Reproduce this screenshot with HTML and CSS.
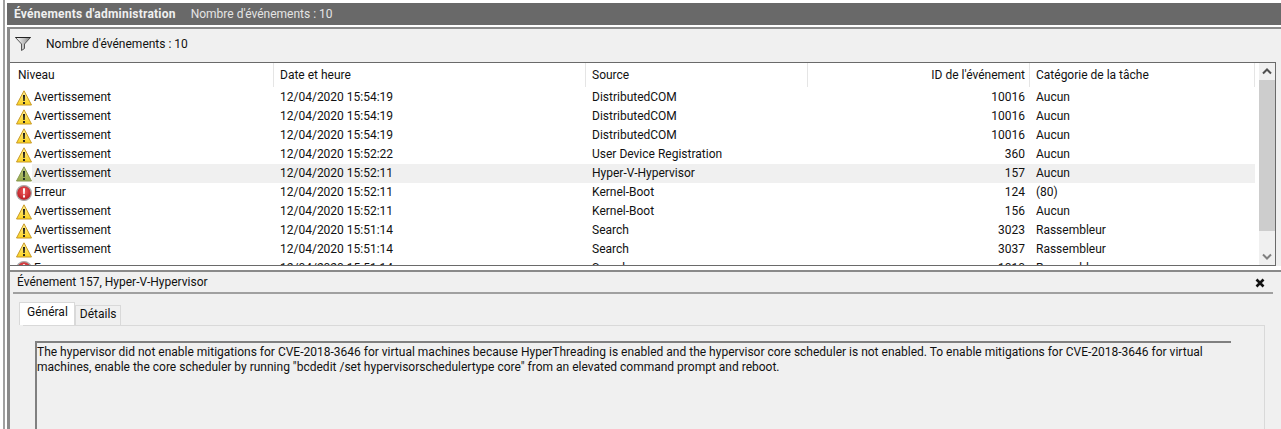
FILE: index.html
```html
<!DOCTYPE html>
<html lang="fr">
<head>
<meta charset="utf-8">
<title>Événements d'administration</title>
<link rel="stylesheet" href="styles.css">
</head>
<body>
<div class="outer">
  <div class="title-bar"><strong>Événements d'administration</strong><span>Nombre d'événements : 10</span></div>
  <div class="panel">
    <div class="list-pane">
      <div class="toolbar">
        <svg class="funnel" width="16" height="14" viewBox="0 0 16 14"><defs><linearGradient id="fg" x1="0" x2="1" y1="0" y2="0"><stop offset="0" stop-color="#fff"/><stop offset=".6" stop-color="#bbb"/><stop offset="1" stop-color="#777"/></linearGradient></defs><path d="M.5.5h15L9.5 7v4.5l-3 2V7z" fill="url(#fg)" stroke="#555" stroke-width="1"/><path d="M.5.5h15" stroke="#222" stroke-width="1"/></svg>
        <span>Nombre d'événements : 10</span>
      </div>
      <div class="list-frame">
        <div class="list">
          <div class="row head"><div>Niveau</div><div>Date et heure</div><div>Source</div><div class="num">ID de l'événement</div><div>Catégorie de la tâche</div></div>
          <div class="row"><div class="lvl"><svg class="ico" viewBox="0 0 16 16"><defs><linearGradient id="wy" x1="0" x2="0" y1="0" y2="1"><stop offset="0" stop-color="#fff09a"/><stop offset="1" stop-color="#fbd21e"/></linearGradient><linearGradient id="wg" x1="0" x2="0" y1="0" y2="1"><stop offset="0" stop-color="#c6cf84"/><stop offset="1" stop-color="#94a84a"/></linearGradient><radialGradient id="er" cx=".5" cy=".4" r=".6"><stop offset="0" stop-color="#ee5a5a"/><stop offset="1" stop-color="#b81820"/></radialGradient></defs><path d="M8 .8 15.5 15H.5z" fill="url(#wy)" stroke="#c89a28" stroke-linejoin="round"/><path d="M7 5h2l-.3 6H7.3zM7.1 12h1.8v2H7.1z" fill="#1a1a1a"/></svg>Avertissement</div><div>12/04/2020 15:54:19</div><div>DistributedCOM</div><div class="num">10016</div><div>Aucun</div></div>
          <div class="row"><div class="lvl"><svg class="ico" viewBox="0 0 16 16"><path d="M8 .8 15.5 15H.5z" fill="url(#wy)" stroke="#c89a28" stroke-linejoin="round"/><path d="M7 5h2l-.3 6H7.3zM7.1 12h1.8v2H7.1z" fill="#1a1a1a"/></svg>Avertissement</div><div>12/04/2020 15:54:19</div><div>DistributedCOM</div><div class="num">10016</div><div>Aucun</div></div>
          <div class="row"><div class="lvl"><svg class="ico" viewBox="0 0 16 16"><path d="M8 .8 15.5 15H.5z" fill="url(#wy)" stroke="#c89a28" stroke-linejoin="round"/><path d="M7 5h2l-.3 6H7.3zM7.1 12h1.8v2H7.1z" fill="#1a1a1a"/></svg>Avertissement</div><div>12/04/2020 15:54:19</div><div>DistributedCOM</div><div class="num">10016</div><div>Aucun</div></div>
          <div class="row"><div class="lvl"><svg class="ico" viewBox="0 0 16 16"><path d="M8 .8 15.5 15H.5z" fill="url(#wy)" stroke="#c89a28" stroke-linejoin="round"/><path d="M7 5h2l-.3 6H7.3zM7.1 12h1.8v2H7.1z" fill="#1a1a1a"/></svg>Avertissement</div><div>12/04/2020 15:52:22</div><div>User Device Registration</div><div class="num">360</div><div>Aucun</div></div>
          <div class="row selected"><div class="lvl"><svg class="ico" viewBox="0 0 16 16"><path d="M8 .8 15.5 15H.5z" fill="url(#wg)" stroke="#8a9a50" stroke-linejoin="round"/><path d="M7 5h2l-.3 6H7.3zM7.1 12h1.8v2H7.1z" fill="#1a2a20"/></svg>Avertissement</div><div>12/04/2020 15:52:11</div><div>Hyper-V-Hypervisor</div><div class="num">157</div><div>Aucun</div></div>
          <div class="row"><div class="lvl"><svg class="ico" viewBox="0 0 16 16"><circle cx="8" cy="8" r="7.4" fill="url(#er)" stroke="#aaa" stroke-width="1.2"/><path d="M6.9 3.2h2.2l-.4 6H7.3zM7 10.3h2v2.2H7z" fill="#fff"/></svg>Erreur</div><div>12/04/2020 15:52:11</div><div>Kernel-Boot</div><div class="num">124</div><div>(80)</div></div>
          <div class="row"><div class="lvl"><svg class="ico" viewBox="0 0 16 16"><path d="M8 .8 15.5 15H.5z" fill="url(#wy)" stroke="#c89a28" stroke-linejoin="round"/><path d="M7 5h2l-.3 6H7.3zM7.1 12h1.8v2H7.1z" fill="#1a1a1a"/></svg>Avertissement</div><div>12/04/2020 15:52:11</div><div>Kernel-Boot</div><div class="num">156</div><div>Aucun</div></div>
          <div class="row"><div class="lvl"><svg class="ico" viewBox="0 0 16 16"><path d="M8 .8 15.5 15H.5z" fill="url(#wy)" stroke="#c89a28" stroke-linejoin="round"/><path d="M7 5h2l-.3 6H7.3zM7.1 12h1.8v2H7.1z" fill="#1a1a1a"/></svg>Avertissement</div><div>12/04/2020 15:51:14</div><div>Search</div><div class="num">3023</div><div>Rassembleur</div></div>
          <div class="row"><div class="lvl"><svg class="ico" viewBox="0 0 16 16"><path d="M8 .8 15.5 15H.5z" fill="url(#wy)" stroke="#c89a28" stroke-linejoin="round"/><path d="M7 5h2l-.3 6H7.3zM7.1 12h1.8v2H7.1z" fill="#1a1a1a"/></svg>Avertissement</div><div>12/04/2020 15:51:14</div><div>Search</div><div class="num">3037</div><div>Rassembleur</div></div>
          <div class="row"><div class="lvl"><svg class="ico" viewBox="0 0 16 16"><circle cx="8" cy="8" r="7.4" fill="url(#er)" stroke="#aaa" stroke-width="1.2"/><path d="M6.9 3.2h2.2l-.4 6H7.3zM7 10.3h2v2.2H7z" fill="#fff"/></svg>Erreur</div><div>12/04/2020 15:51:14</div><div>Search</div><div class="num">1010</div><div>Rassembleur</div></div>
        </div>
        <div class="scrollbar">
          <svg class="arrow" width="16" height="17" viewBox="0 0 16 17"><path d="M4 10.5 8 6.5l4 4" fill="none" stroke="#505050" stroke-width="2"/></svg>
          <div class="thumb"></div>
          <div class="track"></div>
          <svg class="arrow" width="16" height="17" viewBox="0 0 16 17"><path d="M4 6.5 8 10.5l4-4" fill="none" stroke="#808080" stroke-width="2"/></svg>
        </div>
      </div>
    </div>
    <div class="detail">
      <div class="detail-head"><span>Événement 157, Hyper-V-Hypervisor</span><svg width="10" height="10" viewBox="0 0 10 10"><path d="M1.5 1.5l7 7M8.5 1.5l-7 7" stroke="#111" stroke-width="2.6"/></svg></div>
      <div class="tabs"><div class="tab active">Général</div><div class="tab">Détails</div></div>
      <div class="tab-body">
        <div class="message">The hypervisor did not enable mitigations for CVE-2018-3646 for virtual machines because HyperThreading is enabled and the hypervisor core scheduler is not enabled. To enable mitigations for CVE-2018-3646 for virtual machines, enable the core scheduler by running "bcdedit /set hypervisorschedulertype core" from an elevated command prompt and reboot.</div>
      </div>
    </div>
  </div>
</div>
</body>
</html>
```

FILE: styles.css
```css
* { box-sizing: border-box; }
html, body { margin: 0; height: 429px; overflow: hidden; background: #fff; }
body {
  font: 12px/15px Roboto, "Noto Sans", sans-serif;
  color: #111;
  padding-left: 3px;
}
.outer {
  height: 429px;
  border-left: 2px solid #a0a0a0;
  padding: 3px 0 0 2px;
  display: flex;
  flex-direction: column;
  overflow: hidden;
}
.title-bar {
  height: 22px;
  background: #696969;
  color: #e4e4e4;
  display: flex;
  align-items: center;
  padding-left: 7px;
  gap: 15px;
  flex: none;
}
.title-bar strong { color: #f0f0f0; font-weight: 700; letter-spacing: .22px; }
.panel {
  margin-top: 2px;
  flex: 1;
  min-height: 0;
  border-top: 2px solid #8a8a8a;
  border-left: 3px solid #8a8a8a;
  background: #fff;
  display: flex;
  flex-direction: column;
}
.list-pane {
  height: 237px;
  flex: none;
  padding-right: 5px;
  display: flex;
  flex-direction: column;
  background: #f0f0f0;
}
.toolbar {
  height: 33px;
  flex: none;
  display: flex;
  align-items: center;
  padding: 0 0 3px 5px;
  gap: 15px;
  background: #f0f0f0;
}
.funnel { margin-top: -1px; }
.list-frame {
  flex: 1;
  min-height: 0;
  display: flex;
  border-top: 1px solid #6a6a6a;
  border-bottom: 1px solid #6a6a6a;
  border-right: 1px solid #6a6a6a;
  background: #fff;
}
.list {
  flex: 1;
  min-width: 0;
  overflow: hidden;
  padding-left: 2px;
}
.row {
  display: grid;
  grid-template-columns: 261px 312px 222px 222px 226px;
  height: 19px;
  align-items: center;
  width: 1243px;
}
.row > div { padding-left: 7px; white-space: nowrap; }
.row > .num { text-align: right; padding: 0 4px 0 0; }
.row > .lvl { padding-left: 4px; display: flex; align-items: center; height: 19px; }
.head { height: 25px; align-items: start; }
.head > div { height: 24px; line-height: 24px; border-left: 1px solid #e5e5e5; padding-left: 6px; }
.head > div:first-child { border-left: 0; }
.head > div:last-child { border-right: 1px solid #e5e5e5; }
.ico { width: 16px; height: 16px; flex: none; margin-right: 2px; }
.selected { background: linear-gradient(#f0f0f0, #f0f0f0) 20px 0 no-repeat; }
.scrollbar {
  width: 16px;
  flex: none;
  margin-left: 4px;
  background: #f0f0f0;
  display: flex;
  flex-direction: column;
}
.arrow { display: block; flex: none; }
.thumb { height: 151px; background: #cdcdcd; flex: none; }
.track { flex: 1; }
.detail {
  flex: 1;
  min-height: 0;
  margin-top: 4px;
  border-top: 2px solid #8a8a8a;
  background: #f0f0f0;
  padding: 0 8px 0 3px;
}
.detail-head {
  height: 22px;
  display: flex;
  align-items: center;
  justify-content: space-between;
  padding: 1px 8px 0 4px;
  border-bottom: 2px solid #a0a0a0;
}
.tabs {
  display: flex;
  align-items: flex-end;
  margin: 8px 0 0 6px;
  height: 23px;
}
.tab {
  height: 20px;
  line-height: 17px;
  padding: 0 3px 0 4px;
  border: 1px solid #d9d9d9;
  border-bottom: 0;
  background: #f0f0f0;
}
.tab.active {
  height: 23px;
  line-height: 18px;
  padding: 0 6px 0 7px;
  background: #fff;
}
.tab-body {
  margin-left: 10px;
  margin-right: 8px;
  height: 120px;
  border-top: 1px solid #d9d9d9;
  border-right: 1px solid #d9d9d9;
  padding: 15px 33px 0 12px;
  background: #f0f0f0;
}
.message {
  height: 110px;
  border-top: 2px solid #808080;
  border-left: 2px solid #808080;
  padding: 2px 2px 0 0;
}
```
